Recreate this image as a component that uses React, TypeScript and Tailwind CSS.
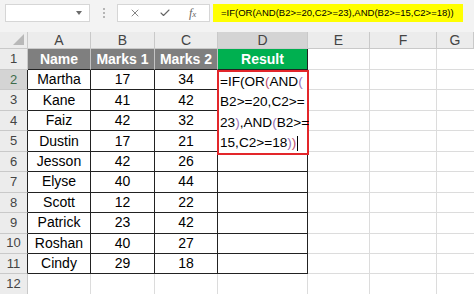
import { X, Check } from "lucide-react";

// ─── Data ─────────────────────────────────────────────────────────────────────

const FORMULA = "=IF(OR(AND(B2>=20,C2>=23),AND(B2>=15,C2>=18))";

const ROWS: [string, number, number][] = [
  ["Martha", 17, 34],
  ["Kane", 41, 42],
  ["Faiz", 42, 32],
  ["Dustin", 17, 21],
  ["Jesson", 42, 26],
  ["Elyse", 40, 44],
  ["Scott", 12, 22],
  ["Patrick", 23, 42],
  ["Roshan", 40, 27],
  ["Cindy", 29, 18],
];

const LETTERS = ["A", "B", "C", "D", "E", "F", "G"];

const font = { fontFamily: '"Liberation Sans", Arial, sans-serif' };

// ─── Pieces ───────────────────────────────────────────────────────────────────

function TopBar() {
  return (
    <div className="h-[32px] bg-[#f3f3f3] flex items-start pt-[4px] pl-[5px]">
      <div className="w-[85px] h-[18px] bg-white border border-[#d6d6d6] flex items-center justify-end pr-[7px]">
        <span className="w-0 h-0 border-l-[3px] border-r-[3px] border-t-[4px] border-l-transparent border-r-transparent border-t-[#6b6b6b]" />
      </div>
      <div className="w-[27px] h-[18px] flex flex-col items-center justify-center gap-[2px]">
        <span className="w-[2px] h-[2px] bg-[#b5b5b5]" />
        <span className="w-[2px] h-[2px] bg-[#b5b5b5]" />
        <span className="w-[2px] h-[2px] bg-[#b5b5b5]" />
      </div>
      <div className="w-[93px] h-[18px] bg-white border border-[#d6d6d6] flex items-center text-[#666]">
        <X className="w-[12px] h-[12px] ml-[11px]" strokeWidth={1.6} />
        <Check className="w-[12px] h-[12px] ml-[18px]" strokeWidth={2.2} />
        <span
          className="ml-[18px] italic text-[12px] leading-none"
          style={{ fontFamily: '"Liberation Serif", serif' }}
        >
          f<span className="text-[9px]">x</span>
        </span>
      </div>
      <div className="ml-[3px] w-[250px] h-[18px] bg-[#ffff00] flex items-center pl-[8px] text-[9.5px] text-black whitespace-nowrap">
        {FORMULA}
      </div>
    </div>
  );
}

function FormulaBox() {
  return (
    <div className="absolute left-[217px] top-[70px] w-[92px] h-[85px] border-2 border-[#e3262a] bg-white pl-[1px] text-[13.6px] text-black leading-[20.4px] whitespace-nowrap">
      <div>
        =IF(OR<span className="text-[#c0506e]">(</span>AND<span className="text-[#9b72b8]">(</span>
      </div>
      <div>B2&gt;=20,C2&gt;=</div>
      <div>
        23<span className="text-[#9b72b8]">)</span>,AND<span className="text-[#9b72b8]">(</span>B2&gt;=
      </div>
      <div>
        15,C2&gt;=18<span className="text-[#9b72b8]">)</span>
        <span className="text-[#c0506e]">)</span>
        <span className="inline-block w-[1px] h-[15px] bg-black align-middle ml-[1px]" />
      </div>
    </div>
  );
}

// ─── Page ─────────────────────────────────────────────────────────────────────

export default function App() {
  return (
    <div className="relative w-[474px] h-[294px] overflow-hidden bg-white" style={font}>
      <TopBar />

      <div className="grid grid-cols-[28px_63px_64px_63px_90px_62px_67px_1fr] grid-rows-[17px_21px_repeat(11,20.45px)] text-[14px]">
        {/* Column headers */}
        <div className="relative bg-[#ececec] border-r border-b border-[#c9c9c9]">
          <span
            className="absolute right-[3px] bottom-[3px] w-0 h-0"
            style={{ borderBottom: "11px solid #b8b8b8", borderLeft: "11px solid transparent" }}
          />
        </div>
        {LETTERS.map((l) => (
          <div
            key={l}
            className={`flex items-center justify-center border-r border-b border-[#c9c9c9] text-[#444] ${
              l === "D" ? "bg-[#d4d4d4]" : "bg-[#ececec]"
            }`}
          >
            {l}
          </div>
        ))}

        {/* Row 1 */}
        <div className="flex items-center justify-center bg-[#ececec] border-r border-b border-[#c9c9c9] text-[#444] text-[13px]">
          1
        </div>
        {["Name", "Marks 1", "Marks 2"].map((h) => (
          <div
            key={h}
            className="flex items-center justify-center bg-[#7f7f7f] border-r border-b border-r-[#c4c4c4] border-b-[#222] text-white font-bold"
          >
            {h}
          </div>
        ))}
        <div className="flex items-center justify-center bg-[#00b050] border-r border-b border-[#222] text-white font-bold">
          Result
        </div>
        <div className="border-r border-b border-[#dcdcdc]" />
        <div className="border-r border-b border-[#dcdcdc]" />
        <div className="border-b border-[#dcdcdc]" />

        {/* Data rows */}
        {ROWS.map(([name, m1, m2], i) => (
          <div key={name} className="contents">
            <div
              className={`flex items-center justify-center border-r border-b border-r-[#222] border-b-[#c9c9c9] text-[13px] ${
                i === 0 ? "bg-[#d4d4d4] text-[#3d6b4a]" : "bg-[#ececec] text-[#444]"
              }`}
            >
              {i + 2}
            </div>
            <div className="flex items-center justify-center border-r border-b border-[#222] text-black">{name}</div>
            <div className="flex items-center justify-center border-r border-b border-[#222] text-black">{m1}</div>
            <div className="flex items-center justify-center border-r border-b border-[#222] text-black">{m2}</div>
            <div className="border-r border-b border-[#222]" />
            <div className="border-r border-b border-[#dcdcdc]" />
            <div className="border-r border-b border-[#dcdcdc]" />
            <div className="border-b border-[#dcdcdc]" />
          </div>
        ))}

        {/* Row 12 */}
        <div className="flex items-center justify-center bg-[#ececec] border-r border-b border-[#c9c9c9] text-[#444] text-[13px]">
          12
        </div>
        <div className="border-r border-b border-[#dcdcdc]" />
        <div className="border-r border-b border-[#dcdcdc]" />
        <div className="border-r border-b border-[#dcdcdc]" />
        <div className="border-r border-b border-[#dcdcdc]" />
        <div className="border-r border-b border-[#dcdcdc]" />
        <div className="border-r border-b border-[#dcdcdc]" />
        <div className="border-b border-[#dcdcdc]" />
      </div>

      <FormulaBox />
    </div>
  );
}
